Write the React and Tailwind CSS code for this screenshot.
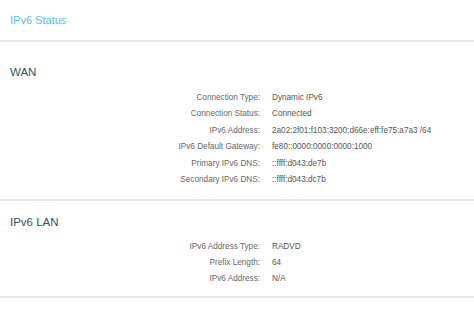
import React from 'react';

const wanRows = [
  ['Connection Type:', 'Dynamic IPv6'],
  ['Connection Status:', 'Connected'],
  ['IPv6 Address:', '2a02:2f01:f103:3200:d66e:eff:fe75:a7a3 /64'],
  ['IPv6 Default Gateway:', 'fe80::0000:0000:0000:1000'],
  ['Primary IPv6 DNS:', '::ffff:d043:de7b'],
  ['Secondary IPv6 DNS:', '::ffff:d043:dc7b'],
];

const lanRows = [
  ['IPv6 Address Type:', 'RADVD'],
  ['Prefix Length:', '64'],
  ['IPv6 Address:', 'N/A'],
];

function Row({ label, value, h }) {
  return (
    <div className={`flex items-center ${h}`}>
      <div className="w-[260px] text-right text-[#666]">{label}</div>
      <div className="pl-[12px] text-[#555]">{value}</div>
    </div>
  );
}

export default function App() {
  return (
    <div className="w-[474px] h-[313px] bg-white overflow-hidden" style={{ fontFamily: '"Liberation Sans", Arial, sans-serif' }}>
      {/* header */}
      <div className="h-[42px] border-b-2 border-[#e8e8e8] pl-[10px] pt-[13px]">
        <div className="text-[11px] leading-[14px] text-[#55c3d9]">IPv6 Status</div>
      </div>

      {/* WAN */}
      <div className="h-[159px] border-b-2 border-[#e8e8e8]">
        <div className="pl-[10px] pt-[23px] text-[11.5px] leading-[14px] text-[#34525a]">WAN</div>
        <div className="mt-[11px] text-[8.2px]">
          {wanRows.map(([l, v]) => (
            <Row key={l} label={l} value={v} h="h-[16.4px]" />
          ))}
        </div>
      </div>

      {/* IPv6 LAN */}
      <div className="h-[97px] border-b-2 border-[#e8e8e8]">
        <div className="pl-[10px] pt-[14px] text-[11.5px] leading-[14px] text-[#34525a]">IPv6 LAN</div>
        <div className="mt-[10px] text-[8.2px]">
          {lanRows.map(([l, v]) => (
            <Row key={l} label={l} value={v} h="h-[16px]" />
          ))}
        </div>
      </div>
    </div>
  );
}
